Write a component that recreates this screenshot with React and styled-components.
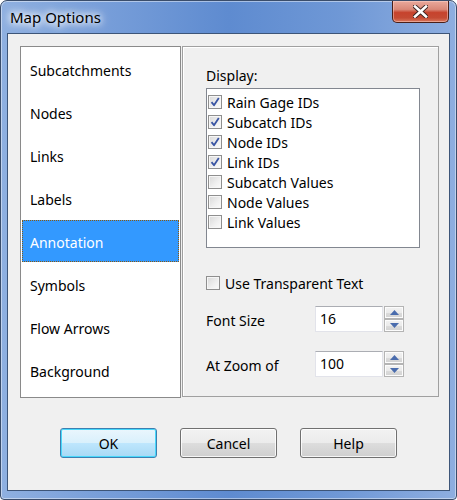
import React from "react";
import styled, { createGlobalStyle } from "styled-components";

const GlobalStyle = createGlobalStyle`
  html, body {
    margin: 0;
    padding: 0;
    background: #ffffff;
  }
  body {
    font-family: "Noto Sans", "DejaVu Sans", sans-serif;
  }
`;

const categories = [
  "Subcatchments",
  "Nodes",
  "Links",
  "Labels",
  "Annotation",
  "Symbols",
  "Flow Arrows",
  "Background",
];

const displayItems = [
  { label: "Rain Gage IDs", checked: true },
  { label: "Subcatch IDs", checked: true },
  { label: "Node IDs", checked: true },
  { label: "Link IDs", checked: true },
  { label: "Subcatch Values", checked: false },
  { label: "Node Values", checked: false },
  { label: "Link Values", checked: false },
];

const Window = styled.div`
  width: 457px;
  height: 500px;
  box-sizing: border-box;
  border: 1px solid #3a4d6b;
  border-radius: 7px 7px 4px 4px;
  background: linear-gradient(
    90deg,
    #8fb0e0 0%,
    #7aa0da 20%,
    #5e8bd0 50%,
    #6f98d6 75%,
    #8eaee0 100%
  );
  padding: 0 6px 8px 6px;
  display: flex;
  flex-direction: column;
  box-shadow: inset 0 0 0 1px rgba(255, 255, 255, 0.45);
`;

const TitleBar = styled.div`
  height: 32px;
  display: flex;
  align-items: flex-start;
  justify-content: space-between;
`;

const Title = styled.div`
  font-family: "Noto Sans", sans-serif;
  font-size: 15px;
  color: #000;
  padding: 6px 0 0 3px;
  text-shadow: 0 0 8px #fff, 0 0 6px #fff, 0 0 12px rgba(255, 255, 255, 0.9);
`;

const CloseButton = styled.div`
  width: 57px;
  height: 22px;
  margin-right: 1px;
  box-sizing: border-box;
  border: 1px solid #4a1f18;
  border-top: none;
  border-radius: 0 0 5px 5px;
  background: linear-gradient(
    180deg,
    #e9a99c 0%,
    #d98878 40%,
    #c6432d 55%,
    #c44a33 80%,
    #d9785e 100%
  );
  box-shadow: inset 0 0 0 1px rgba(255, 220, 210, 0.45);
  display: flex;
  align-items: center;
  justify-content: center;
`;

const Client = styled.div`
  flex: 1;
  border: 1px solid #3d5578;
  background: #f0f0f0;
  display: flex;
  flex-direction: column;
`;

const Main = styled.div`
  display: flex;
  align-items: flex-start;
  padding: 12px 0 0 12px;
`;

const CategoryList = styled.div`
  width: 161px;
  height: 352px;
  box-sizing: border-box;
  border: 1px solid #8a8a8a;
  background: #fff;
  display: flex;
  flex-direction: column;
`;

const CategoryItem = styled.div`
  box-sizing: border-box;
  display: flex;
  align-items: center;
  font-size: 14px;
  color: ${(p) => (p.$selected ? "#fff" : "#000")};
  background: ${(p) => (p.$selected ? "#3399ff" : "transparent")};
  border: ${(p) => (p.$selected ? "1px dotted #8a5a10" : "none")};
  margin: ${(p) => (p.$selected ? "1px 1px 0 1px" : "0")};
  height: ${(p) => (p.$selected ? "42px" : "43px")};
  padding: ${(p) => (p.$selected ? "2px 0 0 7px" : "3px 0 0 9px")};
`;

const Panel = styled.div`
  width: 257px;
  height: 351px;
  margin-left: 1px;
  box-sizing: border-box;
  border: 1px solid #a0a0a0;
  box-shadow: inset 1px 1px 0 #fff;
  padding: 19px 0 0 23px;
  display: flex;
  flex-direction: column;
`;

const Label = styled.div`
  font-size: 14px;
  line-height: 20px;
  color: #000;
`;

const CheckList = styled.div`
  width: 214px;
  height: 160px;
  margin-top: 2px;
  box-sizing: border-box;
  border: 1px solid #828790;
  background: #fff;
  padding: 3px 0 0 1px;
  display: flex;
  flex-direction: column;
`;

const CheckRow = styled.div`
  height: 20px;
  display: flex;
  align-items: center;
  gap: 5px;
  font-size: 14px;
  color: #000;
  margin-top: ${(p) => p.$mt || 0}px;
`;

const Box = styled.div`
  width: 14px;
  height: 14px;
  box-sizing: border-box;
  border: 1px solid #8f8f8f;
  background: linear-gradient(135deg, #d8d8d8 0%, #f0f0f0 60%, #fbfbfb 100%);
  box-shadow: inset 0 0 0 1px #f6f6f6;
  display: flex;
  align-items: center;
  justify-content: center;
  flex-shrink: 0;
`;

const FieldRow = styled.div`
  display: flex;
  align-items: center;
  margin-top: ${(p) => p.$mt}px;
`;

const FieldLabel = styled.div`
  width: 109px;
  font-size: 14px;
  color: #000;
  padding-top: 2px;
`;

const TextBox = styled.div`
  width: 68px;
  height: 26px;
  box-sizing: border-box;
  border: 1px solid #e2e3ea;
  border-top-color: #abadb3;
  background: #fff;
  font-size: 14px;
  line-height: 24px;
  padding-left: 4px;
  color: #000;
`;

const Spin = styled.div`
  width: 20px;
  height: 26px;
  margin-left: 1px;
  display: flex;
  flex-direction: column;
`;

const SpinButton = styled.div`
  flex: 1;
  box-sizing: border-box;
  border: 1px solid #b4b4b4;
  box-shadow: inset 0 0 0 1px #fcfcfc;
  background: linear-gradient(180deg, #f2f2f2 0%, #ebebeb 50%, #dcdcdc 51%, #d2d2d2 100%);
  display: flex;
  align-items: center;
  justify-content: center;
`;

const ButtonRow = styled.div`
  display: flex;
  justify-content: center;
  gap: 23px;
  margin-top: 30px;
`;

const Button = styled.div`
  width: 97px;
  height: 30px;
  box-sizing: border-box;
  border-radius: 3px;
  border: 1px solid ${(p) => (p.$default ? "#3c7fb1" : "#707070")};
  background: ${(p) =>
    p.$default
      ? "linear-gradient(180deg, #eaf6fd 0%, #d9f0fc 50%, #bee6fd 51%, #a7d9f5 100%)"
      : "linear-gradient(180deg, #f2f2f2 0%, #ebebeb 50%, #dddddd 51%, #cfcfcf 100%)"};
  box-shadow: inset 0 0 0 1px
    ${(p) => (p.$default ? "#48d8fb" : "rgba(255,255,255,0.8)")};
  display: flex;
  align-items: center;
  justify-content: center;
  font-size: 14px;
  color: #000;
`;

const Check = () => (
  <svg width="10" height="10" viewBox="0 0 10 10">
    <path
      d="M1.5 5.2 L4 8.2 L8.8 1"
      fill="none"
      stroke="#3a55a3"
      strokeWidth="1.8"
      strokeLinejoin="round"
    />
  </svg>
);

const CheckBox = ({ checked }) => <Box>{checked && <Check />}</Box>;

const Arrow = ({ up }) => (
  <svg width="9" height="5" viewBox="0 0 9 5">
    <path d={up ? "M0 5 L4.5 0 L9 5 Z" : "M0 0 L4.5 5 L9 0 Z"} fill="#4a6cad" />
  </svg>
);

const CloseGlyph = () => (
  <svg width="15" height="13" viewBox="0 0 15 13">
    <path
      d="M2 1.5 L13 11.5 M13 1.5 L2 11.5"
      stroke="#3a2320"
      strokeWidth="4.4"
      strokeLinecap="square"
    />
    <path
      d="M2 1.5 L13 11.5 M13 1.5 L2 11.5"
      stroke="#fff"
      strokeWidth="2.6"
      strokeLinecap="square"
    />
  </svg>
);

const Spinner = ({ value, label, mt }) => (
  <FieldRow $mt={mt}>
    <FieldLabel>{label}</FieldLabel>
    <TextBox>{value}</TextBox>
    <Spin>
      <SpinButton>
        <Arrow up />
      </SpinButton>
      <SpinButton>
        <Arrow />
      </SpinButton>
    </Spin>
  </FieldRow>
);

export default function App() {
  return (
    <>
      <GlobalStyle />
      <Window>
        <TitleBar>
          <Title>Map Options</Title>
          <CloseButton>
            <CloseGlyph />
          </CloseButton>
        </TitleBar>
        <Client>
          <Main>
            <CategoryList>
              {categories.map((c) => (
                <CategoryItem key={c} $selected={c === "Annotation"}>
                  {c}
                </CategoryItem>
              ))}
            </CategoryList>
            <Panel>
              <Label>Display:</Label>
              <CheckList>
                {displayItems.map((item) => (
                  <CheckRow key={item.label}>
                    <CheckBox checked={item.checked} />
                    {item.label}
                  </CheckRow>
                ))}
              </CheckList>
              <CheckRow $mt={25}>
                <CheckBox />
                Use Transparent Text
              </CheckRow>
              <Spinner label="Font Size" value="16" mt={13} />
              <Spinner label="At Zoom  of" value="100" mt={19} />
            </Panel>
          </Main>
          <ButtonRow>
            <Button $default>OK</Button>
            <Button>Cancel</Button>
            <Button>Help</Button>
          </ButtonRow>
        </Client>
      </Window>
    </>
  );
}
